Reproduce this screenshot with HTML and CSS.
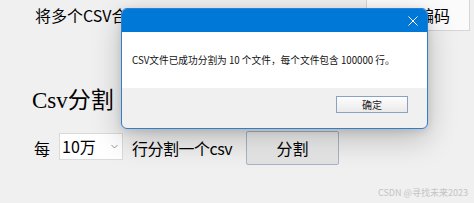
FILE: index.html
```html
<!DOCTYPE html>
<html lang="zh-CN">
<head>
<meta charset="utf-8">
<title>Csv分割</title>
<link rel="stylesheet" href="styles.css">
</head>
<body>
<div class="app">
  <div class="top">
    <div class="top-label">将多个CSV合并为一个CSV</div>
    <div class="top-btn">检测编码</div>
  </div>
  <div class="heading">Csv分割</div>
  <div class="row">
    <span class="per">每</span>
    <div class="select">
      <span>10万</span>
      <svg class="chev" width="7" height="5" viewBox="0 0 7 5"><path d="M0.5 1 L3.5 4 L6.5 1" fill="none" stroke="#8a8a8a" stroke-width="0.9"/></svg>
    </div>
    <span class="row-text">行分割一个csv</span>
    <div class="split-btn">分割</div>
  </div>
</div>

<div class="dialog">
  <div class="dlg-title">
    <svg class="close" width="10" height="10" viewBox="0 0 10 10"><path d="M0.5 0.5 L9.5 9.5 M9.5 0.5 L0.5 9.5" stroke="#ffffff" stroke-width="1"/></svg>
  </div>
  <div class="dlg-body">CSV文件已成功分割为 10 个文件，每个文件包含 100000 行。</div>
  <div class="dlg-foot">
    <div class="ok-btn">确定</div>
  </div>
</div>

<div class="watermark">CSDN @寻找未来2023</div>
</body>
</html>
```
FILE: styles.css
```css
html, body {
  margin: 0;
  padding: 0;
}
body {
  width: 474px;
  height: 203px;
  background: #f0f0f0;
  font-family: "Noto Sans CJK SC", "Noto Sans", sans-serif;
  color: #000;
  position: relative;
  overflow: hidden;
}
.top {
  display: flex;
  justify-content: space-between;
  align-items: flex-start;
  height: 32px;
}
.top-label {
  margin: 4px 0 0 35px;
  font-size: 16px;
  line-height: 22px;
  white-space: nowrap;
}
.top-btn {
  margin: -1px 4px 0 0;
  width: 104px;
  height: 32px;
  box-sizing: border-box;
  border: 1px solid #d6d6d6;
  background: #fbfbfb;
  font-size: 16px;
  display: flex;
  align-items: center;
  justify-content: center;
}
.heading {
  margin: 55px 0 0 32px;
  font-family: "Liberation Serif", "Noto Sans CJK SC", serif;
  font-size: 23px;
  line-height: 27px;
  height: 27px;
}
.row {
  display: flex;
  align-items: center;
  margin: 17px 0 0 34px;
  height: 34px;
  font-size: 16px;
}
.select {
  margin-left: 9px;
  margin-top: -4px;
  width: 64px;
  height: 27px;
  box-sizing: border-box;
  border: 1px solid #dadada;
  background: #fff;
  display: flex;
  align-items: center;
  justify-content: space-between;
  padding: 0 4px 0 2px;
}
.chev {
  display: block;
}
.row-text {
  margin-left: 9px;
  letter-spacing: -0.5px;
}
.split-btn {
  margin-left: 14px;
  width: 93px;
  height: 34px;
  box-sizing: border-box;
  border: 1px solid #a6b6c8;
  border-radius: 2px;
  background: linear-gradient(#f3f3f3, #e2e2e2);
  display: flex;
  align-items: center;
  justify-content: center;
}
.dialog {
  position: absolute;
  left: 121px;
  top: 8px;
  width: 307px;
  height: 121px;
  box-sizing: border-box;
  border: 1px solid #2f7fd0;
  border-radius: 6px;
  overflow: hidden;
  background: #f0f0f0;
  box-shadow: 0 10px 30px rgba(0, 0, 0, 0.22), 0 2px 8px rgba(0, 0, 0, 0.12);
  display: flex;
  flex-direction: column;
}
.dlg-title {
  height: 23px;
  background: #0078d7;
  display: flex;
  justify-content: flex-end;
  align-items: center;
  padding-right: 9px;
}
.close {
  display: block;
}
.dlg-body {
  height: 56px;
  background: #fff;
  font-size: 9.7px;
  line-height: 56px;
  padding-left: 10px;
  white-space: nowrap;
  color: #111;
}
.dlg-foot {
  flex: 1;
  display: flex;
  justify-content: flex-end;
  align-items: flex-start;
  padding: 8px 19px 0 0;
}
.ok-btn {
  width: 72px;
  height: 17px;
  box-sizing: border-box;
  border: 1px solid #8aa2bf;
  background: linear-gradient(#fdfdfd, #eaeaea);
  font-size: 10px;
  line-height: 15px;
  text-align: center;
  color: #222;
}
.watermark {
  position: absolute;
  right: 6px;
  bottom: 5px;
  font-size: 9px;
  line-height: 10px;
  color: #c4c4c4;
  white-space: nowrap;
}
```
